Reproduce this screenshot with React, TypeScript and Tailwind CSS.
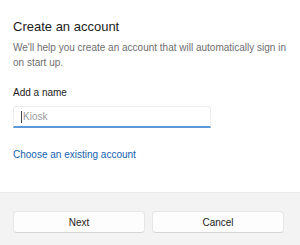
export default function App() {
  return (
    <div className="flex h-[245px] w-[300px] flex-col bg-white font-['Liberation_Sans',Arial,sans-serif]">
      <div className="flex flex-1 flex-col px-[13px] pt-[17px]">
        <h1 className="text-[13px] leading-[20px] text-[#1b1b1b]">Create an account</h1>
        <p className="mt-[3px] text-[10px] leading-[15px] text-[#6e6e6e]">
          We&apos;ll help you create an account that will automatically sign in on start up.
        </p>
        <label className="mt-[15px] text-[10px] leading-[15px] text-[#1b1b1b]">Add a name</label>
        <div className="mt-[6px] flex h-[22px] w-[198px] items-center gap-px rounded-t-[3px] border border-b-2 border-[#ececec] border-b-[#5a98d8] bg-white pl-[7px]">
          <span className="h-[12px] w-px bg-[#444]" />
          <span className="text-[10px] text-[#9a9a9a]">Kiosk</span>
        </div>
        <a className="mt-[19px] text-[10px] leading-[15px] text-[#135fb0]">Choose an existing account</a>
      </div>
      <div className="flex h-[53px] gap-[7px] border-t border-[#ebebeb] bg-[#f3f3f3] pt-[18px] pr-[16px] pl-[13px]">
        <button className="h-[22px] flex-1 rounded-[4px] border border-[#e6e6e6] border-b-[#d6d6d6] bg-[#fdfdfd] text-[10px] text-[#1b1b1b]">
          Next
        </button>
        <button className="h-[22px] flex-1 rounded-[4px] border border-[#e6e6e6] border-b-[#d6d6d6] bg-[#fdfdfd] text-[10px] text-[#1b1b1b]">
          Cancel
        </button>
      </div>
    </div>
  );
}
